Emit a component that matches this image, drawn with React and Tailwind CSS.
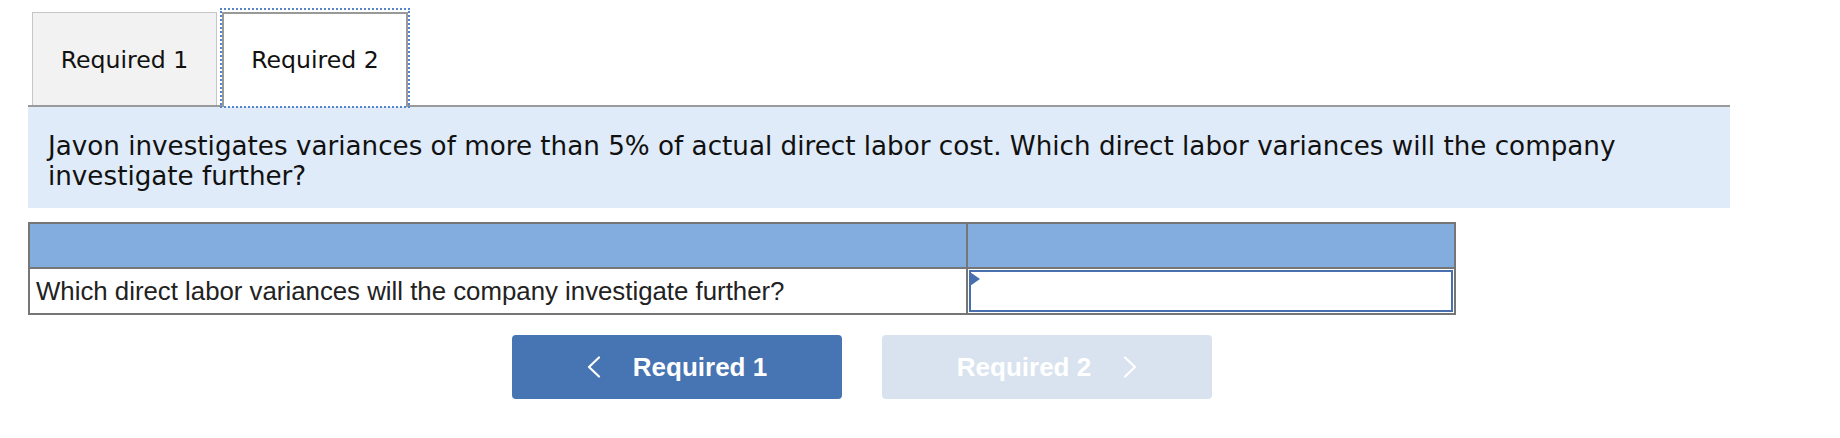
export default function App() {
  return (
    <div className="w-[1840px] h-[438px] bg-white overflow-hidden">
      <div className="pt-[12px] pl-[28px]">
        {/* Tabs */}
        <div className="w-[1702px] flex items-end border-b-2 border-[#9a9a9a] pl-[4px] gap-[5px]">
          <div className="w-[185px] h-[93px] bg-[#f2f2f2] border border-b-0 border-[#c6c6c6] flex items-center justify-center pt-[3px] text-[23.6px] text-[#111] font-['DejaVu_Sans',Verdana,sans-serif]">
            Required 1
          </div>
          <div className="relative w-[186px] h-[95px] -mb-[2px] bg-white border-2 border-b-0 border-[#9a9a9a] flex items-center justify-center pt-[1px] text-[23.6px] text-[#111] font-['DejaVu_Sans',Verdana,sans-serif] z-10">
            <span>Required 2</span>
            <span className="absolute -left-[4px] -right-[4px] -top-[6px] -bottom-[1px] border-[2.5px] border-dotted border-[#5485cc]"></span>
          </div>
        </div>

        {/* Question box */}
        <div className="w-[1702px] bg-[#dfebf8] pt-[24px] pb-[17px] px-[20px] text-[26.2px] leading-[30px] text-[#111] font-['DejaVu_Sans',Verdana,sans-serif]">
          Javon investigates variances of more than 5% of actual direct labor cost. Which direct labor variances will the company investigate further?
        </div>

        {/* Table */}
        <div className="mt-[14px] w-[1428px] border-2 border-[#767676] font-['Liberation_Sans',Arial,sans-serif]">
          <div className="flex h-[43px] bg-[#84addf]">
            <div className="w-[938px] border-r-2 border-[#767676]"></div>
            <div className="flex-1"></div>
          </div>
          <div className="flex h-[46px] border-t-2 border-[#767676]">
            <div className="w-[938px] border-r-2 border-[#767676] flex items-center pl-[6px] text-[25.8px] text-[#222]">
              Which direct labor variances will the company investigate further?
            </div>
            <div className="flex-1 p-[1px]">
              <div className="relative w-full h-full border-[2.5px] border-[#4870ae] bg-white">
                <span className="absolute -left-[1px] top-0 w-0 h-0 border-y-[7px] border-y-transparent border-l-[10px] border-l-[#4870ae]"></span>
              </div>
            </div>
          </div>
        </div>
      </div>

      {/* Navigation buttons */}
      <div className="mt-[20px] pl-[512px] flex gap-[40px] font-['Liberation_Sans',Arial,sans-serif]">
        <div className="w-[330px] h-[64px] rounded-[4px] bg-[#4774b3] flex items-center justify-center text-white text-[26px] font-bold">
          <svg width="14" height="22" viewBox="0 0 14 22" className="mr-[32px]">
            <path d="M12 1.5 L2 11 L12 20.5" fill="none" stroke="white" strokeWidth="2.2" strokeLinecap="round" strokeLinejoin="round" />
          </svg>
          <span>Required 1</span>
        </div>
        <div className="w-[330px] h-[64px] rounded-[4px] bg-[#d9e3ef] flex items-center justify-center text-white text-[26px] font-bold">
          <span>Required 2</span>
          <svg width="14" height="22" viewBox="0 0 14 22" className="ml-[32px]">
            <path d="M2 1.5 L12 11 L2 20.5" fill="none" stroke="white" strokeWidth="2.2" strokeLinecap="round" strokeLinejoin="round" />
          </svg>
        </div>
      </div>
    </div>
  );
}
